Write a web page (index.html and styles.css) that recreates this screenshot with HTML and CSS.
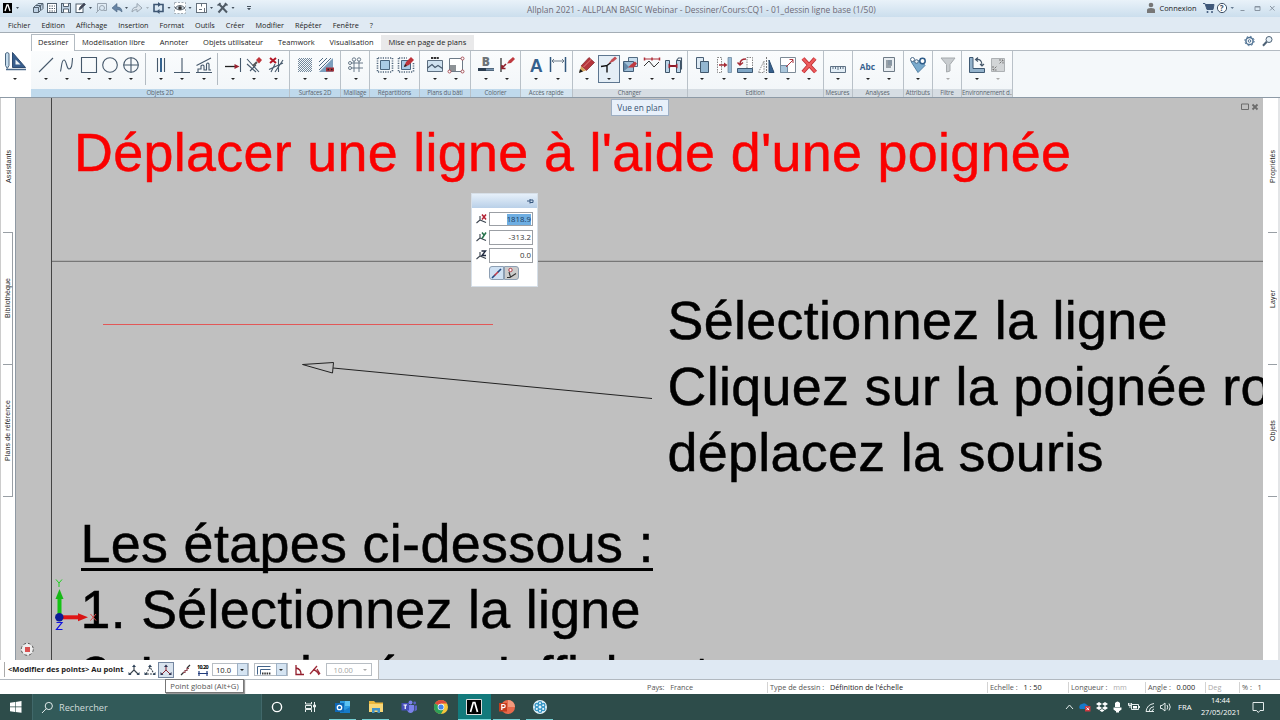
FILE: index.html
```html
<!DOCTYPE html>
<html lang="fr">
<head>
    <meta charset="UTF-8">
    <meta name="viewport" content="width=device-width, initial-scale=1.0">
    <title>Allplan 2021</title>
    <link rel="stylesheet" href="styles.css">
</head>
<body>
    <!-- Title bar -->
    <header class="titlebar">
        <div class="quick">
            <svg width="260" height="17" viewBox="0 0 260 17">
                <rect x="3" y="3" width="9" height="10" fill="#000"/>
                <path d="M5 11 7 5h1l2 6" fill="none" stroke="#fff" stroke-width="1.3"/>
                <g fill="#bfd2e4" stroke="#52616f">
                    <path d="M33.500 7.500l2-2h5v5l-2 2h-5z M36 5.500l2-2h5v5l-2 2"/>
                    <path d="M33.500 7.500h5v5 M38.500 7.500l4.500-4" fill="none"/>
                    <rect x="47.500" y="3.500" width="9" height="9" fill="#fff"/>
                    <path d="M49 6h6M49 8.500h6M49 11h6" stroke-dasharray="1.500 1"/>
                    <rect x="61.500" y="3.500" width="9" height="9"/>
                    <path d="M63.500 3.500v3h5v-3M63.500 12.500v-3.500h5v3.500" fill="#fff"/>
                    <rect x="76" y="4" width="7" height="8.500" fill="#fff"/>
                    <path d="M79 10l1-3 4-4 1.500 1.500-4 4z" fill="#445"/>
                </g>
                <g fill="none" stroke="#9aa6b2">
                    <path d="M97.500 11v-7.500h9v7h-3M96 13l4-4"/><circle cx="102" cy="8" r="2.500"/>
                    <path d="M132 12q0-5 5-5V3.500l5 4.500-5 4V9.500q-3 0-5 2.500" fill="#d9e2ea"/>
                </g>
                <path d="M122 12q0-5-5-5V3.500l-5 4.500 5 4V9.500q3 0 5 2.500z" fill="#6684a5" stroke="#49637e" stroke-width=".6"/>
                <path d="M157 4.500h-3v7h3M160 11.500h3v-7h-3M156 4.500h4M157 11.500h4" fill="none" stroke="#3d5673" stroke-width="1.600"/>
                <path d="M158 2l3 2.500-3 2.500M159.500 9l-3 2.500 3 2.500" fill="#3d5673"/>
                <rect x="174.500" y="2.500" width="11" height="11" fill="#fff" stroke="#a3acb5" stroke-dasharray="2 1.500"/>
                <path d="M175 8q5-5 10 0-5 4-10 0z" fill="#c9d2da" stroke="#56616b"/><circle cx="180" cy="8" r="1.800" fill="#333"/>
                <rect x="196.500" y="3.500" width="10" height="9" fill="#fff" stroke="#65717d"/>
                <path d="M201.500 3.500v3M199 9.500h3M204.500 8v4" stroke="#65717d"/>
                <path d="M219 4l8 8.500M226 4l-7.500 8.500" stroke="#4f5a65" stroke-width="2"/>
                <path d="M217.500 5.500l3-2.500M225 3l2.500 2.500" stroke="#4f5a65" stroke-width="1.600"/>
                <path d="M16 7h3l-1.500 2zM89 7h3l-1.500 2zM125 7h3l-1.500 2zM167.500 7h3l-1.500 2zM188.500 7h3l-1.500 2zM210 7h3l-1.500 2zM231.500 7h3l-1.500 2zM247 8h4l-2 2.200zM247 6h4v1h-4z" fill="#46525e"/>
                <path d="M146 7h3l-1.500 2z" fill="#a8b3bd"/>
            </svg>
        </div>
        <div class="app-title">Allplan 2021 - ALLPLAN BASIC Webinar - Dessiner/Cours:CQ1 - 01_dessin ligne base (1/50)</div>
        <div class="account">
            <svg width="10" height="12" viewBox="0 0 10 12"><circle cx="5" cy="3" r="2.300" fill="#777"/><path d="M1 11V8q0-2 4-2t4 2v3z" fill="#777"/></svg>
            <span>Connexion</span>
            <svg width="74" height="14" viewBox="0 0 74 14">
                <path d="M0 2.500h2l2 6h6l1-5H3" fill="#3f587a" stroke="#3f587a"/><circle cx="4.500" cy="11" r="1" fill="#3f587a"/><circle cx="9" cy="11" r="1" fill="#3f587a"/>
                <circle cx="19" cy="7" r="4.600" fill="#fff" stroke="#3d4f63"/><text x="16.700" y="10" class="help">?</text>
                <path d="M27.500 6h3.500l-1.700 2z" fill="#667b91"/>
                <path d="M37.500 9.500h4M52 5.500h5v4h-5zM52 6h5M67 5l4.500 4.500M71.500 5 67 9.500" fill="none" stroke="#8995a2"/>
            </svg>
        </div>
    </header>

    <nav class="menubar">
        <span>Fichier</span><span>Edition</span><span>Affichage</span><span>Insertion</span><span>Format</span><span>Outils</span><span>Créer</span><span>Modifier</span><span>Répéter</span><span>Fenêtre</span><span>?</span>
    </nav>

    <!-- Ribbon -->
    <section class="ribbon">
        <div class="role">
            <svg width="24" height="22" viewBox="0 0 24 22">
                <path d="M8.500 2.500v15h13z" fill="#375d8d" stroke="#2c4a70"/><path d="M11.500 9.500v5h5z" fill="#eef4f8"/>
                <path d="M1.500 3.500q1.700-2 3.500 0v12l-1.700 3-1.800-3z" fill="#c5dced" stroke="#4b6680"/><path d="M2 19.500h20" stroke="#4c6a8b" stroke-width="1.500"/>
            </svg>
            <i class="drop"></i>
        </div>
        <div class="ribbon-main">
            <div class="tabs">
                <span class="tab active">Dessiner</span><span class="tab">Modélisation libre</span><span class="tab">Annoter</span><span class="tab">Objets utilisateur</span><span class="tab">Teamwork</span><span class="tab">Visualisation</span><span class="tab hover">Mise en page de plans</span>
                <svg class="tab-tools" width="32" height="14" viewBox="0 0 32 14">
                    <circle cx="6.500" cy="6" r="3.600" fill="#fff" stroke="#4d7092" stroke-width="1.500"/><circle cx="6.500" cy="6" r="1.300" fill="none" stroke="#4d7092"/>
                    <circle cx="6.500" cy="6" r="4.700" fill="none" stroke="#4d7092" stroke-width="1" stroke-dasharray="1.600 2.100"/>
                    <circle cx="26" cy="4.500" r="3" fill="#e9f2f8" stroke="#4d6175"/><path d="M23.700 6.700 20 10.700" stroke="#4d6175" stroke-width="2"/>
                </svg>
            </div>
            <div class="groups">
                <div class="group blue">
                    <div class="tools">
                        <a class="tool"><svg class="ico"><path d="M3 17 17 3" class="l"/></svg></a>
                        <a class="tool"><svg class="ico"><path d="M3.500 16.500C5 10 4.500 5 7 5s2.500 9 5 9 3-3 3.500-11" class="l"/></svg></a>
                        <a class="tool"><svg class="ico"><path d="M2.500 2.500h15v15h-15z" class="l"/></svg></a>
                        <a class="tool"><svg class="ico"><circle cx="10" cy="10" r="7.300" class="l"/></svg></a>
                        <a class="tool"><svg class="ico"><path d="M2.500 10h15M10 2.500v15" class="l"/><circle cx="10" cy="10" r="7.300" class="l"/></svg></a>
                        <i class="sep"></i>
                        <a class="tool"><svg class="ico"><path d="M6.500 3v14" class="l"/><path d="M10 3v14" stroke="#35638f" stroke-width="2"/><path d="M13.500 3v14" class="l"/></svg></a>
                        <a class="tool"><svg class="ico"><path d="M2 17.500h16M10 3v14" class="l"/></svg></a>
                        <a class="tool"><svg class="ico"><path d="M2.500 10.500 17 3M2 17.500h16" class="l"/><path d="M4 17v-3h3v-3q2-2 3 0v4h2.500v-6q1.500-2 2.500 0v6h2" class="l"/></svg></a>
                        <i class="sep"></i>
                        <a class="tool"><svg class="ico"><path d="M2 11.500h12" stroke="#222" stroke-width="1.300"/><path d="M17.500 3v14" class="l"/><path d="M11.500 9l5 2.500-5 2.500z" fill="#9b2330"/></svg></a>
                        <a class="tool"><svg class="ico"><path d="M3 4l12 13M3 9l9 8M6 16l6-6" class="l"/><path d="M9 11l4-4" stroke="#555" stroke-width="2"/><path d="M12 5l3-3 3 3-3 3.500z" fill="#bf353b"/></svg></a>
                        <a class="tool"><svg class="ico"><path d="M3 14.500 17 8M12.500 4v13M17 5l-8 12M5 17l4-8" class="l"/><path d="M4 3l6 5M10 3 4 8" stroke="#b31626" stroke-width="2"/></svg></a>
                    </div>
                    <h3>Objets 2D</h3>
                </div>
                <div class="group blue">
                    <div class="tools">
                        <a class="tool"><svg class="ico"><path d="M3 5l2-2M3 9l6-6M3 13 13 3M3 17 17 3M7 17 17 7M11 17l6-6M15 17l2-2M3 7l4-4M3 11l8-8M3 15 15 3M5 17 17 5M9 17l8-8M13 17l4-4" stroke="#506b83" stroke-width=".8"/></svg></a>
                        <a class="tool"><svg class="ico"><path d="M3 7l4-4M3 11l8-8M3 15 15 3M5 17 17 5" stroke="#506b83"/><path d="M17 3v14H3z" fill="#7c9fbd"/><path d="M10 12.500h8v4h-8z" fill="#a9303a"/><path d="M11.500 14.500h1.500M15 14.500h1.500" stroke="#222" stroke-width="1.500"/></svg></a>
                    </div>
                    <h3>Surfaces 2D</h3>
                </div>
                <div class="group blue">
                    <div class="tools">
                        <a class="tool"><svg class="ico"><path d="M5 8h12M5 13h12M8 6v11M13 6v11" class="t"/><circle cx="8" cy="4.500" r="1.700" class="t"/><circle cx="13" cy="4.500" r="1.700" class="t"/><circle cx="4" cy="8" r="1.500" class="t"/><circle cx="4" cy="13" r="1.500" class="t"/></svg></a>
                    </div>
                    <h3>Maillage</h3>
                </div>
                <div class="group blue">
                    <div class="tools">
                        <a class="tool"><svg class="ico"><path d="M2.500 3v14M17.500 3v14M3 3h14M3 17h14" stroke="#52677c" stroke-width="1.600" stroke-dasharray="1.200 1.200"/><path d="M5.500 5.500h9v9h-9z" fill="#a9cbe6" stroke="#49657f"/></svg></a>
                        <a class="tool"><svg class="ico"><path d="M2.500 3v14M17.500 8v9M3 3h8M3 17h14" stroke="#52677c" stroke-width="1.600" stroke-dasharray="1.200 1.200"/><path d="M5.500 5.500h9v9h-9z" fill="#a9cbe6" stroke="#49657f"/><path d="M8 12l2-5 5-5 3 3-5 5z" fill="#bd333a"/><path d="M8 12l1-3 2 2z" fill="#222"/></svg></a>
                    </div>
                    <h3>Répartitions</h3>
                </div>
                <div class="group blue">
                    <div class="tools">
                        <a class="tool"><svg class="ico"><path d="M2.500 5.500h15v11h-15z" fill="#cfe1ef" stroke="#5c6e80"/><path d="M2.500 13 7 9.500l3 3 3-2 4.500 3" class="l"/><path d="M6 3h8" stroke="#333" stroke-width="2" stroke-dasharray="2.200 .6"/></svg></a>
                        <a class="tool"><svg class="ico"><path d="M3.500 3.500h13v13h-13z" fill="#fff" stroke="#6d7b88"/><path d="M4 10h6v6H4z" fill="#8d9296"/><circle cx="16.500" cy="3.500" r="1.500" fill="#fff" stroke="#a8525a"/><circle cx="3.500" cy="16.500" r="1.500" fill="#fff" stroke="#a8525a"/><circle cx="16.500" cy="16.500" r="1.500" fill="#fff" stroke="#a8525a"/></svg></a>
                    </div>
                    <h3>Plans du bâti</h3>
                </div>
                <div class="group blue">
                    <div class="tools">
                        <a class="tool"><svg class="ico"><text x="5.700" y="11" class="glyph-b">B</text><path d="M2 14.500h16" stroke="#2c3e50" stroke-width="3"/><path d="M10 14.500h8" stroke="#7692ad" stroke-width="2"/></svg></a>
                        <a class="tool"><svg class="ico"><path d="M4 3v14" stroke="#333" stroke-width="1.300"/><path d="M5 13l4-4M5 10v3.500h3.500" stroke="#8f1d29" stroke-width="1.600"/><path d="M10 8.500l2-3 4-3.500 2 2-4 4z" fill="#bf3a40"/></svg></a>
                    </div>
                    <h3>Colorier</h3>
                </div>
                <div class="group blue light">
                    <div class="tools">
                        <a class="tool"><svg class="ico"><text x="3.700" y="16.500" class="glyph-a">A</text></svg></a>
                        <a class="tool"><svg class="ico"><path d="M2.500 2v15M17.500 2v15" stroke="#31577d" stroke-width="1.500"/><path d="M4 6h12M6 4 4 6l2 2M14 4l2 2-2 2" class="t"/></svg></a>
                    </div>
                    <h3>Accès rapide</h3>
                </div>
                <div class="group">
                    <div class="tools">
                        <a class="tool"><svg class="ico"><path d="M4 11 12 2.500l5.500 5L9.500 15.500z" fill="#b5343b" stroke="#7c242a" stroke-width=".7"/><path d="M4 11l5 4.500-6.500 2z" fill="#d6a35b"/><path d="M2 18l1-4 3 2.500z" fill="#181818"/><path d="M6.500 12l8-8" stroke="#df7d7d"/></svg></a>
                        <a class="tool pressed"><svg class="ico"><path d="M2 11.500l6-1v7M8 10.500l4-3" stroke="#111" stroke-width="1.400"/><path d="M9.500 8.500l3-4 3.500-3 2 2-3.500 3z" fill="#c24e54"/></svg></a>
                        <a class="tool"><svg class="ico"><path d="M8.500 2.500h9v9h-9z" fill="#c9dfef" stroke="#536c83"/><path d="M3.500 6.500h10v10h-10z" fill="#9dbdd6" stroke="#425d77"/><path d="M4 7l5 5-5 4z" fill="#6388a8"/><path d="M8 12.500l3-3 4-3 2 2-3 4z" fill="#bf3a40"/></svg></a>
                        <a class="tool"><svg class="ico"><path d="M2 4h16" stroke="#ae313b"/><path d="M2 11l5-5 5 6 5-5" stroke="#333"/><path d="M10 2.500v3M2.500 2.500v3M17.500 2.500v3" stroke="#ae313b" stroke-width="1.500"/></svg></a>
                        <a class="tool"><svg class="ico"><path d="M2.500 5.500h4v12h-4zM13.500 5.500h4v12h-4z" fill="#bcd5e8" stroke="#3e5468"/><path d="M13.500 5.500l2-2.500h3v11.500" class="l"/><path d="M6 11h8" stroke="#8a1c2a" stroke-width="2"/><path d="M5.500 8.500v5l3.500-2.500zM14.500 8.500v5L11 11z" fill="#a02331"/></svg></a>
                    </div>
                    <h3>Changer</h3>
                </div>
                <div class="group">
                    <div class="tools">
                        <a class="tool"><svg class="ico"><path d="M4.500 2.500h7v11h-7z" fill="#dce9f3" stroke="#4a6076"/><path d="M8.500 6.500h8v11h-8z" fill="#94b7d1" stroke="#41586d"/></svg></a>
                        <a class="tool"><svg class="ico"><path d="M3.500 2.500h4v15h-4z" class="dash"/><path d="M14 2.500h3.500v15H14z" fill="#98bad5" stroke="#647f96" stroke-width=".7"/><path d="M5 10h6" stroke="#a62b35" stroke-width="1.500"/><path d="M10 7.500l3.500 2.500-3.500 2.500z" fill="#a62b35"/></svg></a>
                        <a class="tool"><svg class="ico"><path d="M12 2.500h5.500v11H12z" class="dash"/><path d="M2.500 13.500h15v4h-15z" fill="#7fa6c5" stroke="#3e5973"/><path d="M5 9q0-5 6-5M2.500 7.500 5 10l3-2.500" stroke="#a62b35" stroke-width="1.500"/></svg></a>
                        <a class="tool"><svg class="ico"><path d="M2.500 17.500 8 6v11.500z" class="dash"/><path d="M10.500 2v16" stroke="#777" stroke-dasharray="2 1"/><path d="M13 5v12.500h5z" fill="#36618e" stroke="#2b4c70"/></svg></a>
                        <a class="tool"><svg class="ico"><path d="M2.500 2.500h15v15h-15z" fill="#fff" stroke="#7d8a96"/><path d="M2.500 10.500h7v7h-7z" fill="#abc7db" stroke="#758ea3"/><path d="M8 12l7-7M11.500 4.500H15v3.500" stroke="#ad3942"/></svg></a>
                        <a class="tool"><svg class="ico"><path d="M4 3.500 16.500 17M16 3.500 4 17" stroke="#b92931" stroke-width="4"/><path d="M4 3.500 16.500 17M16 3.500 4 17" stroke="#ed5b5c" stroke-width="2.500"/></svg></a>
                    </div>
                    <h3>Edition</h3>
                </div>
                <div class="group">
                    <div class="tools">
                        <a class="tool"><svg class="ico"><path d="M2.500 11.500h15v6h-15z" fill="#e3eef6" stroke="#5e7184"/><path d="M5 11v3M7.500 11v3M10 11v4M12.500 11v3M15 11v3" stroke="#5e7184"/></svg></a>
                    </div>
                    <h3>Mesures</h3>
                </div>
                <div class="group">
                    <div class="tools">
                        <a class="tool"><svg class="ico"><text x="1.800" y="14.500" class="glyph-abc">Abc</text></svg></a>
                        <a class="tool"><svg class="ico"><path d="M4.500 2.500h11v14h-11z" fill="#e8edf1" stroke="#6e7b87"/><path d="M7 6h6M7 8h6M7 10h6M7 12h5" stroke="#49545e"/><path d="M9 5h4v5H9z" fill="#8796a3"/></svg></a>
                    </div>
                    <h3>Analyses</h3>
                </div>
                <div class="group">
                    <div class="tools">
                        <a class="tool"><svg class="ico"><path d="M3 6.500l7 11 7-7-4-5z" fill="#79aacd" stroke="#5381a5"/><circle cx="4.500" cy="4.500" r="2" fill="#fff" stroke="#4c6b89"/><circle cx="8.500" cy="6.500" r="1.800" fill="#e8f1f7" stroke="#4c6b89"/><circle cx="14.500" cy="6" r="2.700" fill="#fff" stroke="#2d5b89" stroke-width="1.500"/></svg></a>
                    </div>
                    <h3>Attributs</h3>
                </div>
                <div class="group">
                    <div class="tools">
                        <a class="tool off"><svg class="ico"><path d="M3 3h14l-5 6.500V16l-3.500 1V9.500z" fill="#c9cdd0" stroke="#a5aaad"/></svg></a>
                    </div>
                    <h3>Filtre</h3>
                </div>
                <div class="group">
                    <div class="tools">
                        <a class="tool"><svg class="ico"><path d="M2.500 2.500h3.500v11h11.500v4h-15z" fill="#93b2cb" stroke="#3e5973"/><path d="M9 4.500q6-1 6 6M11 2.500l-2.500 2 2.500 2M13 9l2 2 2-2" class="l"/></svg></a>
                        <a class="tool off"><svg class="ico"><path d="M3.500 3.500h13v13h-13z" fill="#d2d5d7" stroke="#adb1b4"/><path d="M5 15l4-4M5 11v4h4M15 5l-4 4M11 5h4v4" stroke="#777" stroke-dasharray="2 .8"/></svg></a>
                    </div>
                    <h3>Environnement d...</h3>
                </div>
            </div>
        </div>
    </section>

    <!-- Drawing area with side palettes -->
    <main class="workspace">
        <aside class="palettes left">
            <span class="open">Assistants</span><span>Bibliothèque</span><span>Plans de référence</span>
        </aside>
        <section class="canvas">
            <svg class="drawing" viewBox="16 98 1247 562" width="1247" height="562">
                <path d="M51.500 98v562" stroke="#444"/>
                <path d="M52 261.300h1211" stroke="#777" stroke-width="1.300"/>
                <path d="M103 324.500h390" stroke="#e25757"/>
                <path d="M652 398.500 333 368M302.500 364.500l31-2-1 10.500z" stroke="#222" fill="none"/>
                <text x="74" y="171.300" textLength="997" class="red">Déplacer une ligne à l'aide d'une poignée</text>
                <text x="667.500" y="339.300" textLength="500">Sélectionnez la ligne</text>
                <text x="667.500" y="405.300" textLength="603">Cliquez sur la poignée ro</text>
                <text x="667.500" y="471.300" textLength="436">déplacez la souris</text>
                <text x="80.500" y="561.500" textLength="573">Les étapes ci-dessous :</text>
                <path d="M81 569.500h572" stroke="#000" stroke-width="3"/>
                <text x="80.500" y="627.500" textLength="560">1. Sélectionnez la ligne</text>
                <text x="80.500" y="693.500" textLength="629">2. Les poignées s'affichent</text>
                <g stroke-width="4">
                    <path d="M59.500 617v-20" stroke="#15c315"/><path d="M55.500 599l4-10 4 10z" fill="#16b816"/>
                    <path d="M59 617.300h20" stroke="#e01616"/><path d="M78 613.300l10 4-10 4z" fill="#d91414"/>
                </g>
                <circle cx="59.300" cy="617.300" r="4.200" fill="#0c1d96"/>
                <path d="M56 579.500l3 3.500 3-3.500M59 583v4" stroke="#20d020" fill="none"/>
                <path d="M90.500 614l5.500 6.500M96 614l-5.500 6.500" stroke="#d44"/>
                <path d="M56.500 622.500h5.500l-5.500 7h6" stroke="#1010e0" fill="none" stroke-width="1.200"/>
                <circle cx="27.300" cy="649.300" r="6" fill="#eee" stroke="#555" stroke-dasharray="2.700 2"/><path d="M25 647h5v5h-5z" fill="#d95050"/>
            </svg>
            <span class="view-label">Vue en plan</span>
            <svg class="view-controls" width="20" height="10" viewBox="0 0 20 10"><path d="M1.500 2h7v5.500h-7z" fill="none" stroke="#6b6b6b"/><path d="M12.500 2.500l5 5M17.500 2.500l-5 5" stroke="#6b6b6b" stroke-width="1.800"/></svg>
            <div class="coords">
                <div class="coords-head"><svg width="8" height="8" viewBox="0 0 8 8"><path d="M1 4h3M4 2v4.500M4 3h3v2.500H4" stroke="#36577e" fill="none"/></svg></div>
                <div class="coord"><svg width="12" height="12" viewBox="0 0 12 12"><path d="M5 3v4l-3.500 3M5 7l6 2.500" class="axis"/><path d="M7 1.500l4 5M11 1.500l-4 5" stroke="#b32032" stroke-width="1.500"/></svg><b class="field"><mark>1818.9</mark></b></div>
                <div class="coord"><svg width="12" height="12" viewBox="0 0 12 12"><path d="M5 3v4l-3.500 3M5 7l6 2.500" class="axis"/><path d="M7 1.500l2 2.500M11 1.500l-4 6" stroke="#25734a" stroke-width="1.500"/></svg><b class="field">-313.2</b></div>
                <div class="coord"><svg width="12" height="12" viewBox="0 0 12 12"><path d="M5 3v4l-3.500 3M5 7l6 2.500" class="axis"/><path d="M6.500 2h4l-3.500 4.500h4" stroke="#222c42" fill="none" stroke-width="1.400"/></svg><b class="field">0.0</b></div>
                <div class="modes">
                    <span><svg width="13" height="13" viewBox="0 0 13 13"><path d="M2 11l3-3M7.500 5.500 11 2" stroke="#234b83" stroke-width="1.600"/><path d="M4.500 8.500l3.500-3.500" stroke="#bd3a4a" stroke-width="1.600"/></svg></span>
                    <span class="on"><svg width="13" height="13" viewBox="0 0 13 13"><path d="M2 10.500h3l6-4M4 5l1.500 5" stroke="#333" stroke-width="1.100" fill="none"/><circle cx="5.500" cy="3" r="1.700" fill="#fff" stroke="#b33a45"/></svg></span>
                </div>
            </div>
        </section>
        <aside class="palettes right">
            <span>Propriétés</span><span>Layer</span><span>Objets</span>
        </aside>
    </main>

    <!-- Dialog line -->
    <section class="command">
        <div class="dialog-line">
            <b>&lt;Modifier des points&gt; Au point</b>
            <svg class="snap" width="14" height="14" viewBox="0 0 14 14"><path d="M7 3v4l-4 4M7 7l4 4" class="axis"/><path d="M5 4l2-2.500L9 4zM1.500 9v3h3zM12.500 9v3h-3z" fill="#2b4058"/></svg>
            <svg class="snap" width="14" height="14" viewBox="0 0 14 14"><path d="M7 4 3 11h8z" class="axis" stroke-dasharray="2 1"/><path d="M5 4l2-2.500L9 4zM1.500 9v3h3zM12.500 9v3h-3z" fill="#2b4058"/></svg>
            <svg class="snap pushed" width="14" height="14" viewBox="0 0 14 14"><path d="M7 3v4l-4 4M7 7l4 4" stroke="#8b2533" fill="none"/><path d="M5 4l2-2.500L9 4zM1.500 9v3h3zM12.500 9v3h-3z" fill="#2b3050"/></svg>
            <svg class="snap wide" width="14" height="14" viewBox="0 0 14 14"><path d="M2 12l3-3M8 5l3-3" stroke="#333" stroke-width="1.300"/><path d="M4 9.500h2v-2h2v-2h2" fill="none" stroke="#8c4650" stroke-width="1.200"/></svg>
            <svg class="snap" width="14" height="14" viewBox="0 0 14 14"><text x="1" y="5.500" class="tiny">10.20</text><path d="M2 10.500h10M3 8v5M11 8v5" stroke="#223d7c" stroke-width="1.200"/></svg>
            <span class="combo">10.0<i></i></span>
            <span class="combo list"><svg width="18" height="12" viewBox="0 0 18 12"><path d="M2.500 2.500h13M2.500 2.500v8M5.500 5.500h10M5.500 5.500v5" stroke="#42638a" fill="none"/><path d="M7 9.500h9" stroke="#333" stroke-width="2" stroke-dasharray="1.500 .8"/></svg><i></i></span>
            <svg class="snap" width="14" height="14" viewBox="0 0 14 14"><path d="M3 2v9.500h8M3 5q5 1 5 6" stroke="#941f2d" fill="none" stroke-width="1.300"/></svg>
            <svg class="snap" width="14" height="14" viewBox="0 0 14 14"><path d="M1 11l7-8M4 7q4 0 6 5M8 6l3 5" stroke="#9e2c3a" fill="none" stroke-width="1.300"/></svg>
            <span class="combo off">10.00<i></i></span>
        </div>
    </section>

    <!-- Status bar -->
    <footer class="status">
        <span>Pays:&nbsp;&nbsp; France</span>
        <span class="cell">Type de dessin :&nbsp;&nbsp; <em>Définition de l'échelle</em></span>
        <span class="cell">Echelle :&nbsp;&nbsp; <em>1 : 50</em></span>
        <span class="cell">Longueur :&nbsp;&nbsp; <s>mm</s></span>
        <span class="cell">Angle :&nbsp;&nbsp; <em>0.000</em></span>
        <span class="cell"><s>Deg</s></span>
        <span class="cell">% :&nbsp;&nbsp; 1</span>
        <div class="tooltip">Point global (Alt+G)</div>
    </footer>

    <!-- Windows taskbar -->
    <footer class="taskbar">
        <div class="start"><svg width="12" height="12" viewBox="0 0 12 12"><path d="M0 1.700 5 1v4.600H0zM5.600.9 11.500 0v5.600H5.600zM0 6.200h5v4.700l-5-.7zM5.600 6.200h5.900v5.600L5.600 11z" fill="#fff"/></svg></div>
        <div class="search"><svg width="13" height="13" viewBox="0 0 13 13"><circle cx="7.800" cy="5" r="3.600" class="w"/><path d="M5.200 7.700 1 12" class="w"/></svg>Rechercher</div>
        <div class="app"><svg width="16" height="16" viewBox="0 0 16 16"><circle cx="8" cy="8" r="4.600" fill="none" stroke="#fff" stroke-width="1.400"/></svg></div>
        <div class="app"><svg width="16" height="16" viewBox="0 0 16 16"><path d="M3.500 3v2h6V3M3.500 13v-2.500h6V13M3.500 6.500h6v3h-6zM12.500 3v10M11.500 6h2v2h-2z" fill="none" stroke="#e8efee"/></svg></div>
        <div class="app running"><svg width="18" height="16" viewBox="0 0 18 16"><path d="M6 2h10v11H6z" fill="#2c9ae0"/><path d="M11 2h5v5h-5z" fill="#5cc3f3"/><path d="M6 8l5 3 5-3v6H6z" fill="#167bc9"/><path d="M1 4h9v9H1z" fill="#0f68b6"/><circle cx="5.500" cy="8.500" r="2.200" fill="none" stroke="#fff" stroke-width="1.300"/></svg></div>
        <div class="app running"><svg width="16" height="16" viewBox="0 0 16 16"><path d="M1 2h5l1.500 1.500H15V13H1z" fill="#eab63d"/><path d="M1 5h14v8H1z" fill="#f8d778"/><path d="M4 14V9h8v5h-2.500v-2.500h-3V14z" fill="#4293c9"/></svg></div>
        <div class="app"><svg width="16" height="16" viewBox="0 0 16 16"><circle cx="9.500" cy="3.500" r="2" fill="#7b83eb"/><circle cx="13.700" cy="4" r="1.400" fill="#5b63c4"/><path d="M6 6h7v5q-1 3-3.500 3T6 11z" fill="#7b83eb"/><path d="M13.500 6.500H16V11l-2.500 1.500z" fill="#5b63c4"/><path d="M.5 4h7.500v7.500H.5z" fill="#464eb8"/><path d="M2.500 6H6M4.250 6v4" stroke="#fff" stroke-width="1.200"/></svg></div>
        <div class="app"><svg width="16" height="16" viewBox="0 0 16 16"><circle cx="8" cy="8" r="7" fill="#f6c63b"/><path d="M8 8 1.900 4.500A7 7 0 0 1 14.100 4.500H8z" fill="#dd4b3e"/><path d="M8 8 1.900 4.500A7 7 0 0 0 8 15l3-5.500z" fill="#2ea058"/><circle cx="8" cy="8" r="3.300" fill="#fff"/><circle cx="8" cy="8" r="2.600" fill="#4285e8"/></svg></div>
        <div class="app current"><svg width="16" height="16" viewBox="0 0 16 16"><path d="M.5.500h15v15H.5z" fill="#000" stroke="#ddd"/><path d="M4.500 13 7.200 3.500h1.600L11.500 13" fill="none" stroke="#fff" stroke-width="1.700"/></svg></div>
        <div class="app running"><svg width="16" height="16" viewBox="0 0 16 16"><circle cx="9" cy="8" r="7" fill="#e8694b"/><path d="M9 1a7 7 0 0 1 7 7H9z" fill="#f39a7d"/><path d="M0 4h8v8.500H0z" fill="#c23c1e"/><path d="M2.800 11V5.500h1.700q1.700 0 1.700 1.600T4.500 8.700H3" fill="none" stroke="#fff" stroke-width="1.200"/></svg></div>
        <div class="app running"><svg width="16" height="16" viewBox="0 0 16 16"><circle cx="8" cy="8" r="7" fill="#e6f4fb"/><g fill="none" stroke="#3696c5" stroke-width="1.300"><circle cx="8" cy="4.300" r="1.700"/><circle cx="11.200" cy="6.200" r="1.700"/><circle cx="11.200" cy="9.900" r="1.700"/><circle cx="8" cy="11.700" r="1.700"/><circle cx="4.800" cy="9.900" r="1.700"/><circle cx="4.800" cy="6.200" r="1.700"/></g></svg></div>
        <div class="tray">
            <svg width="108" height="16" viewBox="0 0 108 16">
                <path d="M2 10l3.500-4L9 10" class="w"/>
                <path d="M16 10a3 3 0 0 1 2-5q3-2 5 1 3 1 2 4z" fill="#1879c9"/><path d="M21 7h5.500v5.500H21z" fill="#cf3940"/><path d="M22.500 8.500 25 11M25 8.500 22.500 11" stroke="#fff"/>
                <path d="M35 3l3 2-3 2-3-2zM41 3l3 2-3 2-3-2zM35 7l3 2-3 2-3-2zM41 7l3 2-3 2-3-2zM38 10l2.500 1.500L38 13l-2.500-1.500z" fill="#fff"/>
                <path d="M51 4q2.500-3 5 0v5h-5zM49.500 8.500v2l2 1.500h4l2-1.500v-2zM52 12h3v1.500h-3z" fill="#fff"/>
                <path d="M67.500 5.500h7v5h-7zM75.500 7v2M66 4v5M64.500 4v2.500h3V4" class="w"/><path d="M69 7h4v2.500h-4z" fill="#fff"/>
                <path d="M82 12.500q1-7 8-8M85 12.500q.5-4.500 5-5M88 12.500q0-2 2-2.500M82 12.500h8" class="w"/>
                <path d="M96.500 6.500H98l3-2.500v8l-3-2.500h-1.500zM103 6q1.500 2 0 4.500M105 4.500q2.500 3.500 0 7" class="w"/>
            </svg>
            <span class="lang">FRA</span>
            <span class="clock">14:44<br>27/05/2021</span>
            <svg width="13" height="13" viewBox="0 0 13 13"><path d="M1 1.500h10.500v8h-3.500l-1.700 2-1.700-2H1z" class="w"/></svg>
        </div>
    </footer>
</body>
</html>
```
FILE: styles.css
```css
* { box-sizing: border-box; }
body { margin: 0; width: 1280px; height: 720px; overflow: hidden; display: flex; flex-direction: column; background: #fff; font-family: "Open Sans", "Noto Sans", sans-serif; font-size: 7px; color: #1d1d1d; }
svg { display: block; flex: none; }
h3 { margin: 0; font-weight: normal; }

.titlebar { height: 17px; display: flex; align-items: center; background: linear-gradient(#e9f2f9, #cbdeed); }
.quick { width: 527px; }
.app-title { flex: 1; font-size: 8.42px; color: #6e6a76; white-space: nowrap; padding-top: 1px; }
.account { width: 134px; display: flex; align-items: center; gap: 3.5px; font-size: 7.4px; height: 14px; padding-bottom: 2px; }
.account svg:last-child { margin-left: 3px; }
.help { font-size: 8px; font-weight: bold; fill: #3d4f63; }

.menubar { height: 16px; flex: none; display: flex; align-items: center; gap: 11px; padding-left: 8px; background: #e0eaf3; border-bottom: 1px solid #a4adb5; font-size: 7.27px; }

.ribbon { height: 65px; flex: none; display: flex; border-bottom: 1px solid #8d9aa6; }
.role { width: 31px; padding: 17px 0 0 4px; }
.role .drop { margin: 6px 0 0 9px; }
.ribbon-main { flex: 1; display: flex; flex-direction: column; }
.tabs { height: 18px; flex: none; display: flex; align-items: flex-end; font-size: 7.53px; border-bottom: 1px solid #b3bbc2; }
.tab { height: 15.5px; padding: 2.5px 7.4px 0; white-space: nowrap; }
.tab.active { height: 17px; border: 1px solid #b3bbc2; border-bottom: 0; background: #fff; margin-bottom: -1px; padding: 2px 5px 0 6px; }
.tab.hover { background: #e9e9ea; }
.tab-tools { margin: 0 5px 1px auto; }
.groups { flex: 1; display: grid; grid-template-columns: 259px 51px 29px 50px 51px 50px 51.5px 115px 136px 29px 51px 29.5px 29px 51px; background: #f4f8fa; }
.group { display: flex; flex-direction: column; border-right: 1px solid #b9c1c8; background: linear-gradient(#fafcfd, #f1f5f8); min-width: 0; }
.tools { flex: 1; display: flex; justify-content: center; padding-left: 1.5px; }
.tool { width: 21.4px; flex: none; height: 28px; margin-top: 4px; display: flex; flex-direction: column; align-items: center; }
.tool::after, .drop { content: ""; display: block; width: 0; border: 2.2px solid transparent; border-top-color: #222; border-bottom: 0; }
.tool::after { margin-top: 2.5px; }
.tool.off::after { border-top-color: #aaa; }
.pressed { border: 1px solid #5d7690; background: #e4eef6; }
.pressed .ico { margin-top: -1px; }
.ico { width: 20px; height: 20px; overflow: visible; fill: none; }
.sep { width: 8px; height: 32px; margin-top: 2px; background: linear-gradient(90deg, transparent 3.5px, #b3bbc2 3.5px, #b3bbc2 4.5px, transparent 4.5px); }
.l { fill: none; stroke: #45586b; stroke-width: 1.1; }
.t { fill: none; stroke: #5c6e80; stroke-width: .9; }
.dash { fill: #fff; stroke: #777; stroke-width: .9; stroke-dasharray: 1.5 1; }
.glyph-b { font-size: 12px; font-weight: 800; fill: #6d7378; }
.glyph-a { font: bold 18px "Liberation Sans", sans-serif; fill: #36608d; }
.glyph-abc { font-size: 8.3px; font-weight: bold; fill: #36608d; }
.group h3 { height: 8px; font-size: 6.2px; line-height: 8px; text-align: center; background: #d6dde3; color: #5c666f; white-space: nowrap; overflow: hidden; letter-spacing: -.14px; }
.group.blue h3 { background: #bfd9ec; }
.group.light h3 { background: #d3e4f0; }

.workspace { height: 562px; flex: none; display: flex; }
.palettes { display: flex; flex-direction: column; font: 7px "Liberation Sans", sans-serif; letter-spacing: .12px; }
.palettes span { height: 132px; writing-mode: vertical-rl; transform: rotate(180deg); display: flex; align-items: center; justify-content: center; border: 1px solid #999fa5; border-width: 1px 0 0 1px; }
.palettes.left { width: 16px; padding: 3px 2px 0 2px; border-right: 1px solid #8f99a3; border-left: 1px solid #ccc; }
.palettes.left .open { border-left: 0; }
.palettes.right { width: 17px; padding: 3px 1px 0 5px; border-right: 2px solid #e3e5e7; }
.palettes.right span { border-left: 0; }
.canvas { width: 1247px; position: relative; background: #c0c0c0; overflow: hidden; }
.drawing text { font-family: "Liberation Sans", sans-serif; font-size: 53.8px; fill: #000; stroke: #000; stroke-width: .5; }
.drawing .red { fill: #fa0000; stroke: #fa0000; }
.view-label { position: absolute; left: 595px; top: 1px; width: 58px; height: 17px; background: #e8f0fa; border: 1px solid #9eafc4; text-align: center; line-height: 15px; font-size: 8.3px; color: #365171; }
.view-controls { position: absolute; right: 3px; top: 4px; }

.coords { position: absolute; left: 455px; top: 95px; width: 67px; height: 94px; background: #fff; border: 1px solid #d6dfe8; }
.coords-head { height: 14px; background: linear-gradient(#e6f0fa, #b9d0e8); display: flex; justify-content: flex-end; align-items: center; padding-right: 3px; margin-bottom: 2px; }
.coord { display: flex; align-items: center; justify-content: flex-end; gap: 2px; height: 18.2px; padding-right: 4px; }
.field { width: 44px; height: 14.5px; border: 1px solid #9b9fa4; padding: 0 1px; font-weight: normal; font-size: 7.8px; line-height: 12.5px; text-align: right; color: #333; }
.field mark { background: #6eaee2; color: #17395e; display: inline-block; line-height: 11px; }
.modes { display: flex; padding: 1.4px 0 0 17px; }
.modes span { width: 15px; height: 14px; border: 1px solid #8d9fb3; border-radius: 3px 0 0 3px; background: #cfe1f3; }
.modes .on { background: #ccc; border-radius: 0 3px 3px 0; }
.axis { fill: none; stroke: #38424d; stroke-width: 1.1; }

.command { height: 20px; flex: none; background: #dfe9f3; border-bottom: 1px solid #b1b8bf; }
.dialog-line { width: 379px; height: 19px; display: flex; align-items: center; background: #fff; border-right: 1px solid #bbb; padding-left: 4px; }
.dialog-line b { width: 119px; height: 15px; line-height: 15px; padding-left: 3px; border-left: 1px solid #aaa; font-size: 7.6px; letter-spacing: -.02px; white-space: nowrap; margin-right: 3.5px; }
.snap { margin-right: 2.3px; }
.pushed { background: #d9e3ee; outline: 1px solid #7486a0; }
.wide { margin-left: 4px; }
.tiny { font-size: 5.5px; font-weight: bold; letter-spacing: -.6px; }
.combo { display: flex; align-items: center; width: 37px; height: 13px; flex: none; border: 1px solid #b8bec4; padding-left: 3px; font-size: 7.6px; margin-right: 5px; color: #222; }
.combo i { width: 11px; height: 13px; margin-left: auto; background: #d5e4f2; border: 1px solid #9fb1c4; display: flex; align-items: center; justify-content: center; }
.combo i::after { content: ""; border: 2px solid transparent; border-top-color: #222; border-bottom: 0; }
.combo.list { width: 34px; padding: 0; }
.combo.off { width: 46px; color: #a5a5a5; padding-left: 7px; margin: 0; }
.combo.off i { background: none; border: 0; }
.combo.off i::after { border-top-color: #aaa; }

.status { height: 14px; flex: none; position: relative; display: grid; grid-template-columns: 120px 220px 81px 77px 60px 34px 1fr; align-items: center; padding-left: 647px; font-size: 7.3px; color: #555; background: #fff; white-space: nowrap; }
.status .cell { border-left: 1px solid #d3d3d3; padding-left: 2px; line-height: 11px; }
.status em { font-style: normal; color: #222; }
.status s { text-decoration: none; color: #aaa; }
.tooltip { position: absolute; left: 165px; top: -1px; width: 79px; height: 13.5px; background: #fff; border: 1px solid #777; box-shadow: 1px 1px 1px #999; text-align: center; line-height: 12px; font-size: 7.7px; color: #555; }

.taskbar { height: 26px; flex: none; display: flex; background: #2d4c4a; color: #fff; }
.start { width: 32px; display: flex; align-items: center; justify-content: center; }
.search { width: 230px; margin-right: -1px; display: flex; align-items: center; gap: 5px; padding-left: 8px; background: #325a59; border: 1px solid #41686a; border-width: 0 1px; font-size: 9.2px; color: #d0dcdb; }
.app { width: 32.8px; flex: none; display: flex; align-items: center; justify-content: center; }
.running { background: linear-gradient(#76cfd3, #76cfd3) bottom / 27px 1.5px no-repeat; }
.current { background: #137a7c; border-bottom: 1.5px solid #7bd9dc; }
.tray { margin-left: auto; width: 216px; display: flex; align-items: center; }
.lang { width: 14px; margin-left: 6px; font-size: 7.7px; }
.clock { width: 41px; margin: 0 11px 0 8px; font-size: 7.4px; line-height: 12px; text-align: center; position: relative; top: -1px; }
.w { fill: none; stroke: #e4ecec; stroke-width: 1; }
```
